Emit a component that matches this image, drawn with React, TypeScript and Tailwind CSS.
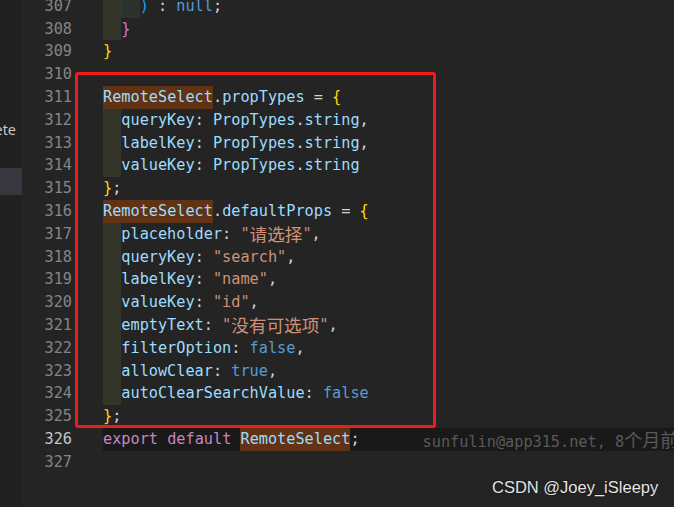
import React from "react";

type Tok = [string, string];
type Line = { n: number; guides: string[]; toks: Tok[]; current?: boolean };

const W = "text-[#d4d4d4]";
const LB = "text-[#9cdcfe]";
const YB = "text-[#ffd700]";
const PB = "text-[#da70d6]";
const BP = "text-[#179fff]";
const KW = "text-[#569cd6]";
const STR = "text-[#ce9178]";
const EX = "text-[#c586c0]";
const HL = "text-[#9cdcfe] bg-[#613214]";
const CJK = "cjk";

const G1 = "bg-[#35362a]";
const G2 = "bg-[#2c332e]";

const lines: Line[] = [
  { n: 307, guides: [G1, G2], toks: [[")", BP], [" : ", W], ["null", KW], [";", W]] },
  { n: 308, guides: [G1], toks: [["}", PB]] },
  { n: 309, guides: [], toks: [["}", YB]] },
  { n: 310, guides: [], toks: [] },
  { n: 311, guides: [], toks: [["RemoteSelect", HL], [".", W], ["propTypes", LB], [" = ", W], ["{", YB]] },
  { n: 312, guides: [G1], toks: [["queryKey", LB], [": ", W], ["PropTypes", LB], [".", W], ["string", LB], [",", W]] },
  { n: 313, guides: [G1], toks: [["labelKey", LB], [": ", W], ["PropTypes", LB], [".", W], ["string", LB], [",", W]] },
  { n: 314, guides: [G1], toks: [["valueKey", LB], [": ", W], ["PropTypes", LB], [".", W], ["string", LB]] },
  { n: 315, guides: [], toks: [["}", YB], [";", W]] },
  { n: 316, guides: [], toks: [["RemoteSelect", HL], [".", W], ["defaultProps", LB], [" = ", W], ["{", YB]] },
  { n: 317, guides: [G1], toks: [["placeholder", LB], [": ", W], ["\"", STR], ["请选择", CJK], ["\"", STR], [",", W]] },
  { n: 318, guides: [G1], toks: [["queryKey", LB], [": ", W], ["\"search\"", STR], [",", W]] },
  { n: 319, guides: [G1], toks: [["labelKey", LB], [": ", W], ["\"name\"", STR], [",", W]] },
  { n: 320, guides: [G1], toks: [["valueKey", LB], [": ", W], ["\"id\"", STR], [",", W]] },
  { n: 321, guides: [G1], toks: [["emptyText", LB], [": ", W], ["\"", STR], ["没有可选项", CJK], ["\"", STR], [",", W]] },
  { n: 322, guides: [G1], toks: [["filterOption", LB], [": ", W], ["false", KW], [",", W]] },
  { n: 323, guides: [G1], toks: [["allowClear", LB], [": ", W], ["true", KW], [",", W]] },
  { n: 324, guides: [G1], toks: [["autoClearSearchValue", LB], [": ", W], ["false", KW]] },
  { n: 325, guides: [], toks: [["}", YB], [";", W]] },
  { n: 326, guides: [], current: true, toks: [["export", EX], [" ", W], ["default", EX], [" ", W], ["RemoteSelect", HL], [";", W]] },
  { n: 327, guides: [], toks: [] },
];

const mono = { fontFamily: '"DejaVu Sans Mono", "Liberation Mono", monospace' };
const cjkFont = { fontFamily: '"Noto Sans CJK SC", sans-serif' };

export default function App() {
  return (
    <div className="relative w-[674px] h-[507px] overflow-hidden flex bg-[#242424]">
      {/* sidebar */}
      <div className="w-[22px] h-full bg-[#212121] flex flex-col pt-[119px] overflow-hidden shrink-0">
        <div
          className="h-[22px] flex items-center justify-end pr-[6px] overflow-hidden whitespace-nowrap text-[14.5px] text-[#cccccc]"
          style={{ fontFamily: '"Open Sans", "Noto Sans", sans-serif' }}
        >
          Autocomplete
        </div>
        <div className="mt-[27px] h-[27px] bg-[#37373d]" />
      </div>

      {/* editor */}
      <div className="flex-1 h-full overflow-hidden">
        <div className="mt-[-5.2px] flex flex-col text-[15.23px]" style={mono}>
          {lines.map((l) => (
            <div key={l.n} className="flex h-[22.8px] items-stretch">
              <div
                className={`w-[50px] shrink-0 text-right leading-[22.8px] ${
                  l.current ? "text-[#c6c6c6]" : "text-[#858585]"
                }`}
              >
                {l.n}
              </div>
              <div
                className={`ml-[31px] flex-1 flex items-stretch whitespace-pre leading-[22.8px] ${
                  l.current ? "bg-[#191919]" : ""
                }`}
              >
                {l.guides.map((g, i) => (
                  <span key={i} className={`inline-block w-[2ch] h-full ${g}`} />
                ))}
                {l.toks.map(([t, c], i) =>
                  c === CJK ? (
                    <span key={i} className="text-[#ce9178] text-[17.6px] leading-[22.8px]" style={cjkFont}>
                      {t}
                    </span>
                  ) : (
                    <span key={i} className={c}>
                      {t}
                    </span>
                  )
                )}
                {l.current && (
                  <span className="ml-[63px] text-[#5a5a5a]">
                    sunfulin@app315.net, 8
                    <span className="text-[18px]" style={cjkFont}>
                      个月前
                    </span>
                  </span>
                )}
              </div>
            </div>
          ))}
        </div>
      </div>

      {/* annotation box */}
      <div className="absolute left-[75px] top-[72px] w-[361px] h-[356px] border-[3px] border-[#f01c1c] rounded-[3px] pointer-events-none" />

      {/* watermark */}
      <div
        className="absolute left-[492px] top-[476px] text-[16.5px] leading-[22px] text-[#e4e4e4] whitespace-nowrap"
        style={{ fontFamily: '"Liberation Sans", Arial, sans-serif', textShadow: "0 0 2px rgba(0,0,0,0.8)" }}
      >
        CSDN @Joey_iSleepy
      </div>
    </div>
  );
}
